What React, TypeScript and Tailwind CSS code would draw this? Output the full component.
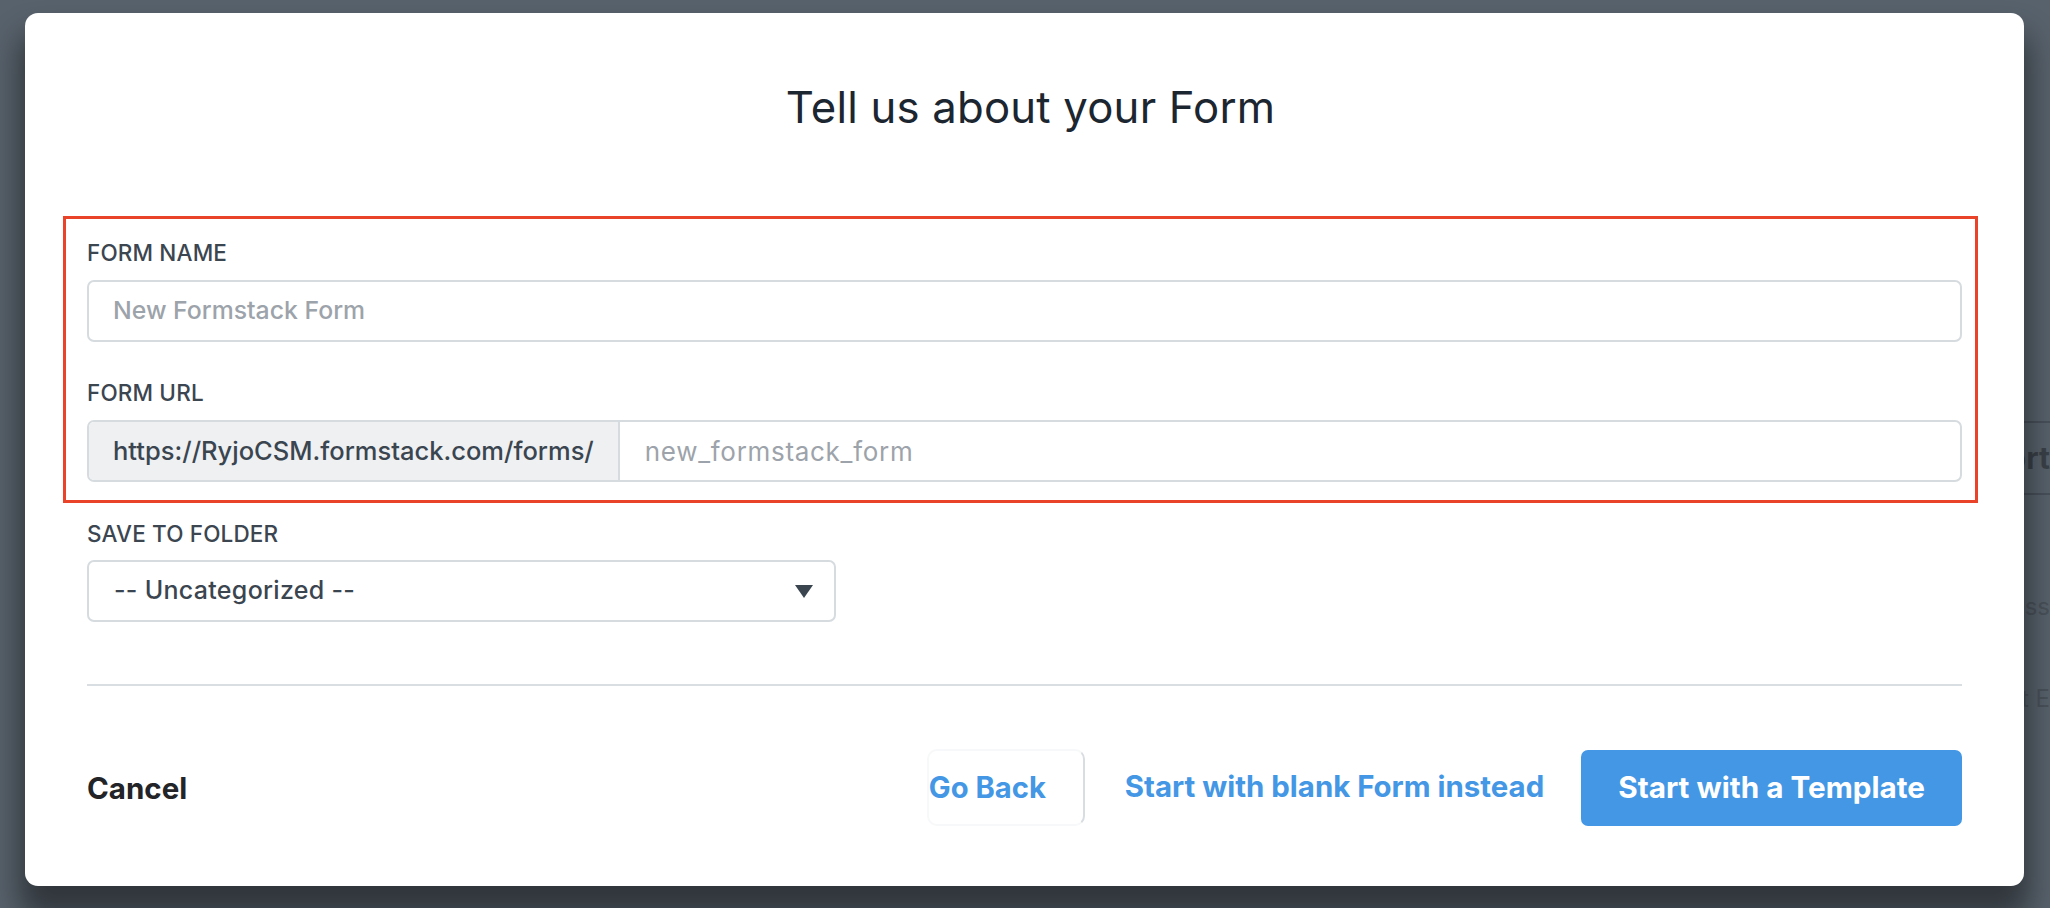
import React from "react";

const font = { fontFamily: "Inter, 'Noto Sans', sans-serif" };

function Label({ children }: { children: React.ReactNode }) {
  return (
    <div className="text-[22.5px] leading-[28px] font-medium text-[#3b4650] tracking-[0.15px]">
      {children}
    </div>
  );
}

export default function App() {
  return (
    <div className="relative w-full h-[908px] overflow-hidden bg-[#58626c]" style={font}>
      {/* faint page behind the overlay (right edge) */}
      <div className="flex justify-end h-full">
        <div className="w-[70px] flex flex-col pt-[421px] overflow-hidden">
          <div className="h-[2px] bg-[#48505a]" />
          <div className="h-[70px] flex items-center justify-end text-[30px] font-bold text-[#3a4148] whitespace-nowrap">
            Sort
          </div>
          <div className="h-[2px] bg-[#48505a]" />
          <div className="h-[98px]" />
          <div className="h-[28px] flex items-center justify-end text-[24px] text-[#4a525a] whitespace-nowrap">
            Access
          </div>
          <div className="h-[64px]" />
          <div className="h-[28px] flex items-center justify-end text-[24px] text-[#4a525a] whitespace-nowrap">
            Start E
          </div>
        </div>
      </div>

      {/* modal */}
      <div className="absolute left-[25px] top-[13px] w-[1999px] h-[873px] bg-white rounded-[13px] shadow-[0_26px_30px_6px_rgba(0,0,0,0.45)] px-[62px] flex flex-col">
        <h1 className="pt-[69px] pl-[12px] text-center text-[43.7px] leading-[52px] font-normal text-[#1c2630] tracking-[0.2px]">
          Tell us about your Form
        </h1>

        {/* annotated section */}
        <div className="relative mt-[105px] flex flex-col">
          <div className="pointer-events-none absolute -left-[24px] -right-[16px] -top-[23px] -bottom-[21px] border-[3px] border-[#e9432a]" />

          <Label>FORM NAME</Label>
          <div className="mt-[13px] h-[62px] border-2 border-[#d6dbdf] rounded-[7px] flex items-center pl-[24px]">
            <span className="text-[24.8px] font-medium text-[#9da3aa]">New Formstack Form</span>
          </div>

          <div className="mt-[37px]">
            <Label>FORM URL</Label>
          </div>
          <div className="mt-[13px] h-[62px] border-2 border-[#d6dbdf] rounded-[7px] flex overflow-hidden">
            <div className="h-full bg-[#eef0f2] border-r-2 border-[#d6dbdf] flex items-center px-[24px]">
              <span className="text-[25.5px] font-medium text-[#3a4550] whitespace-nowrap">
                https://RyjoCSM.formstack.com/forms/
              </span>
            </div>
            <div className="flex-1 flex items-center pl-[25px]">
              <span className="text-[26px] font-normal text-[#9da3aa] tracking-[0.7px]">new_formstack_form</span>
            </div>
          </div>
        </div>

        <div className="mt-[38px]">
          <Label>SAVE TO FOLDER</Label>
        </div>
        <div className="mt-[12px] w-[749px] h-[62px] border-2 border-[#d6dbdf] rounded-[7px] flex items-center justify-between pl-[25px] pr-[21px]">
          <span className="text-[25px] font-medium text-[#3a4550] tracking-[0.3px]">-- Uncategorized --</span>
          <svg width="18" height="13" viewBox="0 0 18 13">
            <path d="M0 0 H18 L9 13 Z" fill="#3a4550" />
          </svg>
        </div>

        <div className="mt-[62px] h-[2px] bg-[#d9dee2]" />

        <div className="mt-[63px] flex items-center justify-between">
          <button className="text-[29.5px] font-bold text-[#222428] leading-[36px]">Cancel</button>
          <div className="flex items-center">
            <button className="h-[77px] pr-[37px] border-2 border-[#f7f8f9] border-r-[#d8dde1] rounded-[10px] flex items-center text-[29.2px] font-bold text-[#4497e5]">
              Go Back
            </button>
            <button className="h-[77px] pl-[40px] pr-[37px] flex items-center text-[29.4px] font-bold text-[#4497e5] whitespace-nowrap">
              Start with blank Form instead
            </button>
            <button className="h-[76px] px-[37px] bg-[#4497e5] rounded-[7px] flex items-center text-[29.7px] font-bold text-white whitespace-nowrap">
              Start with a Template
            </button>
          </div>
        </div>
      </div>
    </div>
  );
}
